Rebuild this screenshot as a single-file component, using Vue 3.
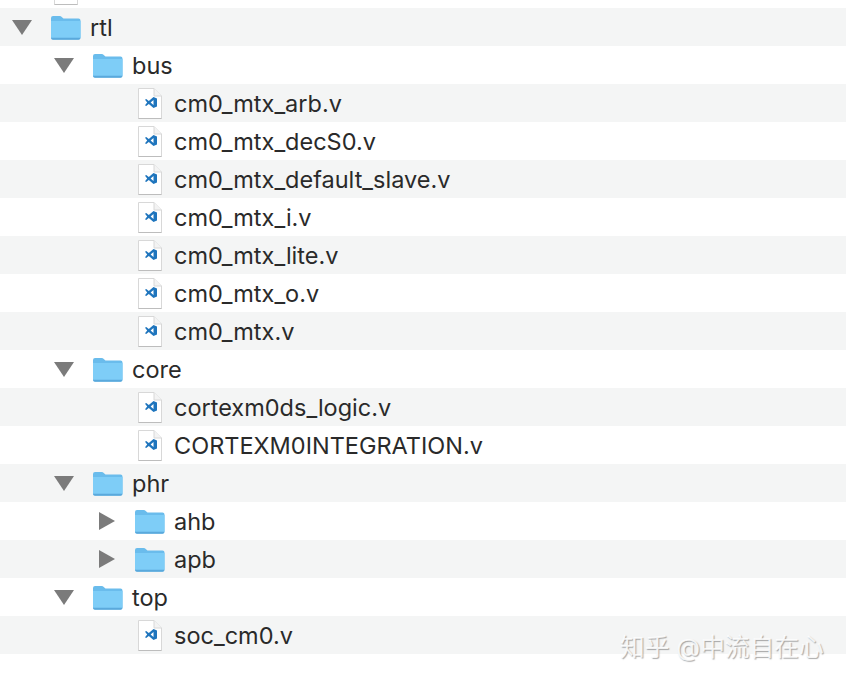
<script setup>
// file tree rows, depth drives the indent class
const rows = [
  { type: 'file', depth: -2, name: '' },
  { type: 'open', depth: 0, name: 'rtl' },
  { type: 'open', depth: 1, name: 'bus' },
  { type: 'file', depth: 2, name: 'cm0_mtx_arb.v' },
  { type: 'file', depth: 2, name: 'cm0_mtx_decS0.v' },
  { type: 'file', depth: 2, name: 'cm0_mtx_default_slave.v' },
  { type: 'file', depth: 2, name: 'cm0_mtx_i.v' },
  { type: 'file', depth: 2, name: 'cm0_mtx_lite.v' },
  { type: 'file', depth: 2, name: 'cm0_mtx_o.v' },
  { type: 'file', depth: 2, name: 'cm0_mtx.v' },
  { type: 'open', depth: 1, name: 'core' },
  { type: 'file', depth: 2, name: 'cortexm0ds_logic.v' },
  { type: 'file', depth: 2, name: 'CORTEXM0INTEGRATION.v' },
  { type: 'open', depth: 1, name: 'phr' },
  { type: 'closed', depth: 2, name: 'ahb' },
  { type: 'closed', depth: 2, name: 'apb' },
  { type: 'open', depth: 1, name: 'top' },
  { type: 'file', depth: 2, name: 'soc_cm0.v' },
]
</script>

<template>
  <div class="page">
    <div class="tree">
      <div
        v-for="(row, i) in rows"
        :key="i"
        class="row"
        :class="[i % 2 === 1 ? 'striped' : '', row.type === 'file' ? 'is-file' : 'is-folder', 'depth' + row.depth]"
      >
        <template v-if="row.type === 'file'">
          <svg class="file-icon" width="24" height="31" viewBox="0 0 24 31">
            <path d="M0.5 0.5H16L23.5 8V30.5H0.5Z" fill="#fff" stroke="#d8d8d8" />
            <path d="M0.5 30.5H23.5" stroke="#bdbdbd" />
            <path d="M16 0.5V8H23.5" fill="#f3f3f3" stroke="#d8d8d8" />
            <path d="M15.5 9L19 10.5V18.5L15.5 20L10.8 16L8.2 18L7 17.2L9.2 14.5L7 11.8L8.2 11L10.8 13ZM15.5 12L12.6 14.5L15.5 17Z" fill="#1f75bd" fill-rule="evenodd" />
          </svg>
        </template>
        <template v-else>
          <svg v-if="row.type === 'open'" class="arrow" width="20" height="15" viewBox="0 0 20 15">
            <path d="M0 0H20L10 15Z" fill="#7b7b7b" />
          </svg>
          <svg v-else class="arrow" width="16" height="18" viewBox="0 0 16 18">
            <path d="M0 0L16 9L0 18Z" fill="#7b7b7b" />
          </svg>
          <svg class="folder-icon" width="31" height="25" viewBox="0 0 31 25">
            <path d="M1 3Q1 1 3 1H9.5Q11 1 12 2.2L13.5 3.5H28.5Q30.5 3.5 30.5 5.5V22.5Q30.5 24.5 28.5 24.5H3Q1 24.5 1 22.5Z" fill="#6abcec" />
            <path d="M1 6H30.5V22Q30.5 23.5 28.5 23.5H3Q1 23.5 1 22Z" fill="#7ecdf7" />
            <path d="M1 22.8H30.5V22.5Q30.5 24.7 28.5 24.7H3Q1 24.7 1 22.5Z" fill="#5aa9dc" />
          </svg>
        </template>
        <span class="name">{{ row.name }}</span>
      </div>
    </div>
    <div class="watermark">知乎 @中流自在心</div>
  </div>
</template>

<style scoped>
.page {
  position: relative;
  width: 846px;
  height: 680px;
  overflow: hidden;
  background: #fff;
  font-family: Inter, "Noto Sans CJK SC", sans-serif;
}
.tree {
  margin-top: -30px;
}
.row {
  display: flex;
  align-items: center;
  height: 38px;
  color: #2a2a2a;
  font-size: 23.5px;
}
.striped {
  background: #f4f5f5;
}
.name {
  padding-top: 1px;
}
.is-folder.depth0 { padding-left: 12px; }
.is-folder.depth1 { padding-left: 54px; }
.is-folder.depth2 { padding-left: 99px; }
.is-file.depth-2 { padding-left: 54px; }
.is-file.depth2 { padding-left: 138px; }
.arrow {
  flex: none;
}
.is-folder.depth0 .arrow,
.is-folder.depth1 .arrow {
  margin-right: 18px;
}
.is-folder.depth2 .arrow {
  margin-right: 19px;
}
.folder-icon {
  flex: none;
  margin-right: 9px;
}
.file-icon {
  flex: none;
  margin-right: 12px;
}
.watermark {
  position: absolute;
  left: 620px;
  top: 632px;
  font-size: 24.7px;
  line-height: 30px;
  color: rgba(255, 255, 255, 0.85);
  text-shadow: 1px 1px 1px rgba(90, 90, 90, 0.5);
  white-space: nowrap;
}
</style>
